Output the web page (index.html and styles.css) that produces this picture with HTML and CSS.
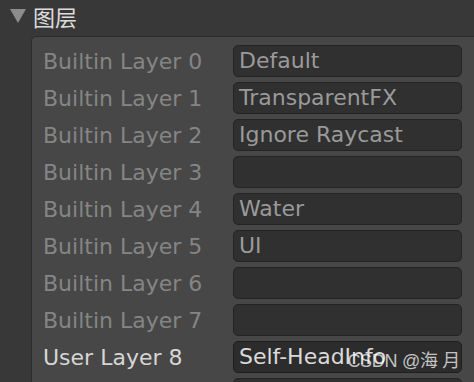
FILE: index.html
```html
<!DOCTYPE html>
<html>
<head>
<meta charset="utf-8">
<link rel="stylesheet" href="styles.css">
</head>
<body>
<div class="header">
  <span class="tri"></span>
  <span class="title">图层</span>
</div>
<div class="panel">
  <div class="row"><span class="label">Builtin Layer 0</span><span class="field">Default</span></div>
  <div class="row"><span class="label">Builtin Layer 1</span><span class="field">TransparentFX</span></div>
  <div class="row"><span class="label">Builtin Layer 2</span><span class="field">Ignore Raycast</span></div>
  <div class="row"><span class="label">Builtin Layer 3</span><span class="field"></span></div>
  <div class="row"><span class="label">Builtin Layer 4</span><span class="field">Water</span></div>
  <div class="row"><span class="label">Builtin Layer 5</span><span class="field">UI</span></div>
  <div class="row"><span class="label">Builtin Layer 6</span><span class="field"></span></div>
  <div class="row"><span class="label">Builtin Layer 7</span><span class="field"></span></div>
  <div class="row user"><span class="label">User Layer 8</span><span class="field">Self-HeadInfo</span></div>
  <div class="row"><span class="label"></span><span class="field"></span></div>
</div>
<div class="watermark">CSDN @海 月</div>
</body>
</html>
```
FILE: styles.css
```css
html, body {
  margin: 0;
  padding: 0;
  width: 474px;
  height: 382px;
  overflow: hidden;
  background: #383838;
  font-family: "DejaVu Sans", "Noto Sans CJK SC", sans-serif;
}
body { position: relative; }
.header {
  height: 36px;
  display: flex;
  align-items: center;
  padding-left: 10px;
  gap: 7px;
  box-sizing: border-box;
  padding-bottom: 4px;
}
.tri {
  width: 0; height: 0;
  border-left: 8px solid transparent;
  border-right: 8px solid transparent;
  border-top: 14px solid #8c8c8c;
}
.title {
  color: #dcdcdc;
  font-size: 22px;
  font-family: "Noto Sans CJK SC", sans-serif;
  line-height: 1;
}
.panel {
  margin-left: 31px;
  width: 443px;
  height: 346px;
  background: #474747;
  border: 1px solid #2c2c2c;
  border-right: none;
  border-bottom: none;
  border-radius: 5px 0 0 0;
  box-sizing: border-box;
  padding: 8px 12px 0 11px;
  display: flex;
  flex-direction: column;
  gap: 5px;
  overflow: hidden;
}
.row {
  display: flex;
  align-items: center;
  height: 32px;
  flex-shrink: 0;
}
.label {
  width: 190px;
  color: #858585;
  font-size: 22px;
  white-space: nowrap;
}
.field {
  flex: 1;
  height: 32px;
  box-sizing: border-box;
  background: #303030;
  border: 1px solid #242424;
  border-radius: 5px;
  color: #9a9a9a;
  font-size: 22px;
  line-height: 30px;
  padding-left: 5px;
  white-space: nowrap;
}
.user .label { color: #d6d6d6; }
.user .field { color: #dadada; background: #2c2c2c; border-color: #1e1e1e; }
.watermark {
  position: absolute;
  right: 14px;
  top: 346px;
  font-size: 18px;
  letter-spacing: -0.3px;
  color: rgba(255,255,255,0.72);
  font-family: "Liberation Sans", "Noto Sans CJK SC", sans-serif;
  white-space: nowrap;
}
```
